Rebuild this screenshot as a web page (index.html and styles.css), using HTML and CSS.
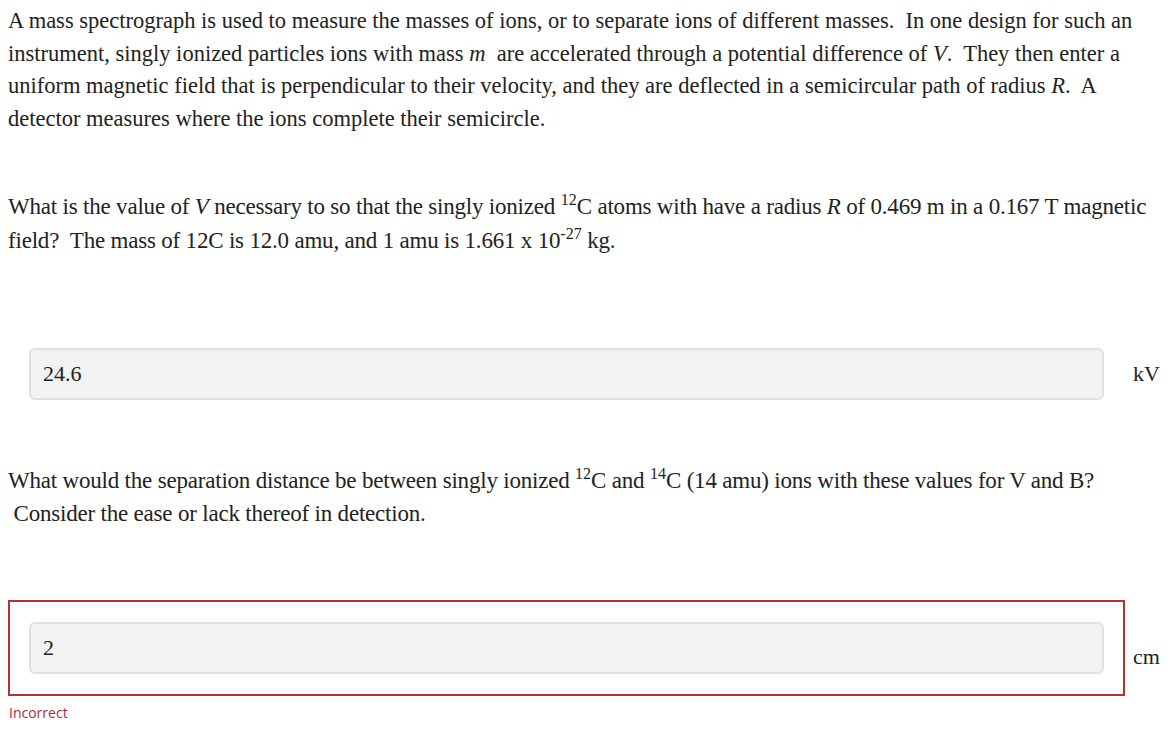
FILE: index.html
```html
<!DOCTYPE html>
<html lang="en">
<head>
    <meta charset="UTF-8">
    <title>Mass Spectrograph</title>
    <link rel="stylesheet" href="styles.css">
</head>
<body>
    <div class="question">
        <p class="intro">A mass spectrograph is used to measure the masses of ions, or to separate ions of different masses.&nbsp; In one design for such an instrument, singly ionized particles ions with mass <i>m</i>&nbsp; are accelerated through a potential difference of <i>V</i>.&nbsp; They then enter a uniform magnetic field that is perpendicular to their velocity, and they are deflected in a semicircular path of radius <i>R</i>.&nbsp; A detector measures where the ions complete their semicircle.</p>

        <p class="part part-one">What is the value of <i>V</i> necessary to so that the singly ionized <sup>12</sup>C atoms with have a radius <i>R</i> of 0.469 m in a 0.167 T magnetic field?&nbsp; The mass of 12C is 12.0 amu, and 1 amu is 1.661 x 10<sup>-27</sup> kg.</p>

        <div class="answer-row first">
            <div class="answer-box">
                <input class="answer" type="text" value="24.6">
            </div>
            <span class="unit">kV</span>
        </div>

        <p class="part part-two">What would the separation distance be between singly ionized <sup>12</sup>C and <sup>14</sup>C (14 amu) ions with these values for V and B?<br>&nbsp;Consider the ease or lack thereof in detection.</p>

        <div class="answer-row second">
            <div class="answer-box incorrect">
                <input class="answer" type="text" value="2">
            </div>
            <span class="unit">cm</span>
        </div>
        <div class="feedback">Incorrect</div>
    </div>
</body>
</html>
```

FILE: styles.css
```css
body {
    margin: 5px 8px 8px;
    background-color: #fff;
    color: #222;
    font-family: 'Liberation Serif', 'Times New Roman', serif;
    font-size: 22.5px;
}

p {
    margin: 0;
}

.intro {
    line-height: 32.5px;
}

.part {
    font-size: 23px;
    letter-spacing: -0.2px;
    line-height: 34px;
}

.part-one {
    margin-top: 55px;
}

.part-two {
    margin-top: 42px;
    line-height: 33px;
}

sup {
    font-size: 16px;
    line-height: 0;
    letter-spacing: 0;
}

.answer-row {
    display: flex;
    align-items: center;
    gap: 8px;
}

.answer-row.first {
    margin-top: 68px;
}

.answer-row.second {
    margin-top: 70px;
}

.answer-box {
    width: 1117px;
    padding: 20px 19px;
    border: 2px solid transparent;
    box-sizing: border-box;
}

.answer-box.incorrect {
    border-color: #b8312f;
}

.answer {
    display: block;
    width: 100%;
    height: 52px;
    box-sizing: border-box;
    padding: 0 12px;
    border: 2px solid #e0e0e0;
    border-radius: 6px;
    background-color: #f2f2f2;
    font-family: 'Liberation Serif', 'Times New Roman', serif;
    font-size: 22px;
    color: #222;
    outline: none;
}

.unit {
    font-size: 22px;
}

.second .unit {
    padding-top: 18px;
}

.feedback {
    margin-top: 7px;
    margin-left: 1px;
    font-family: 'Open Sans', 'Liberation Sans', sans-serif;
    font-size: 14px;
    color: #b02a3c;
}
```
